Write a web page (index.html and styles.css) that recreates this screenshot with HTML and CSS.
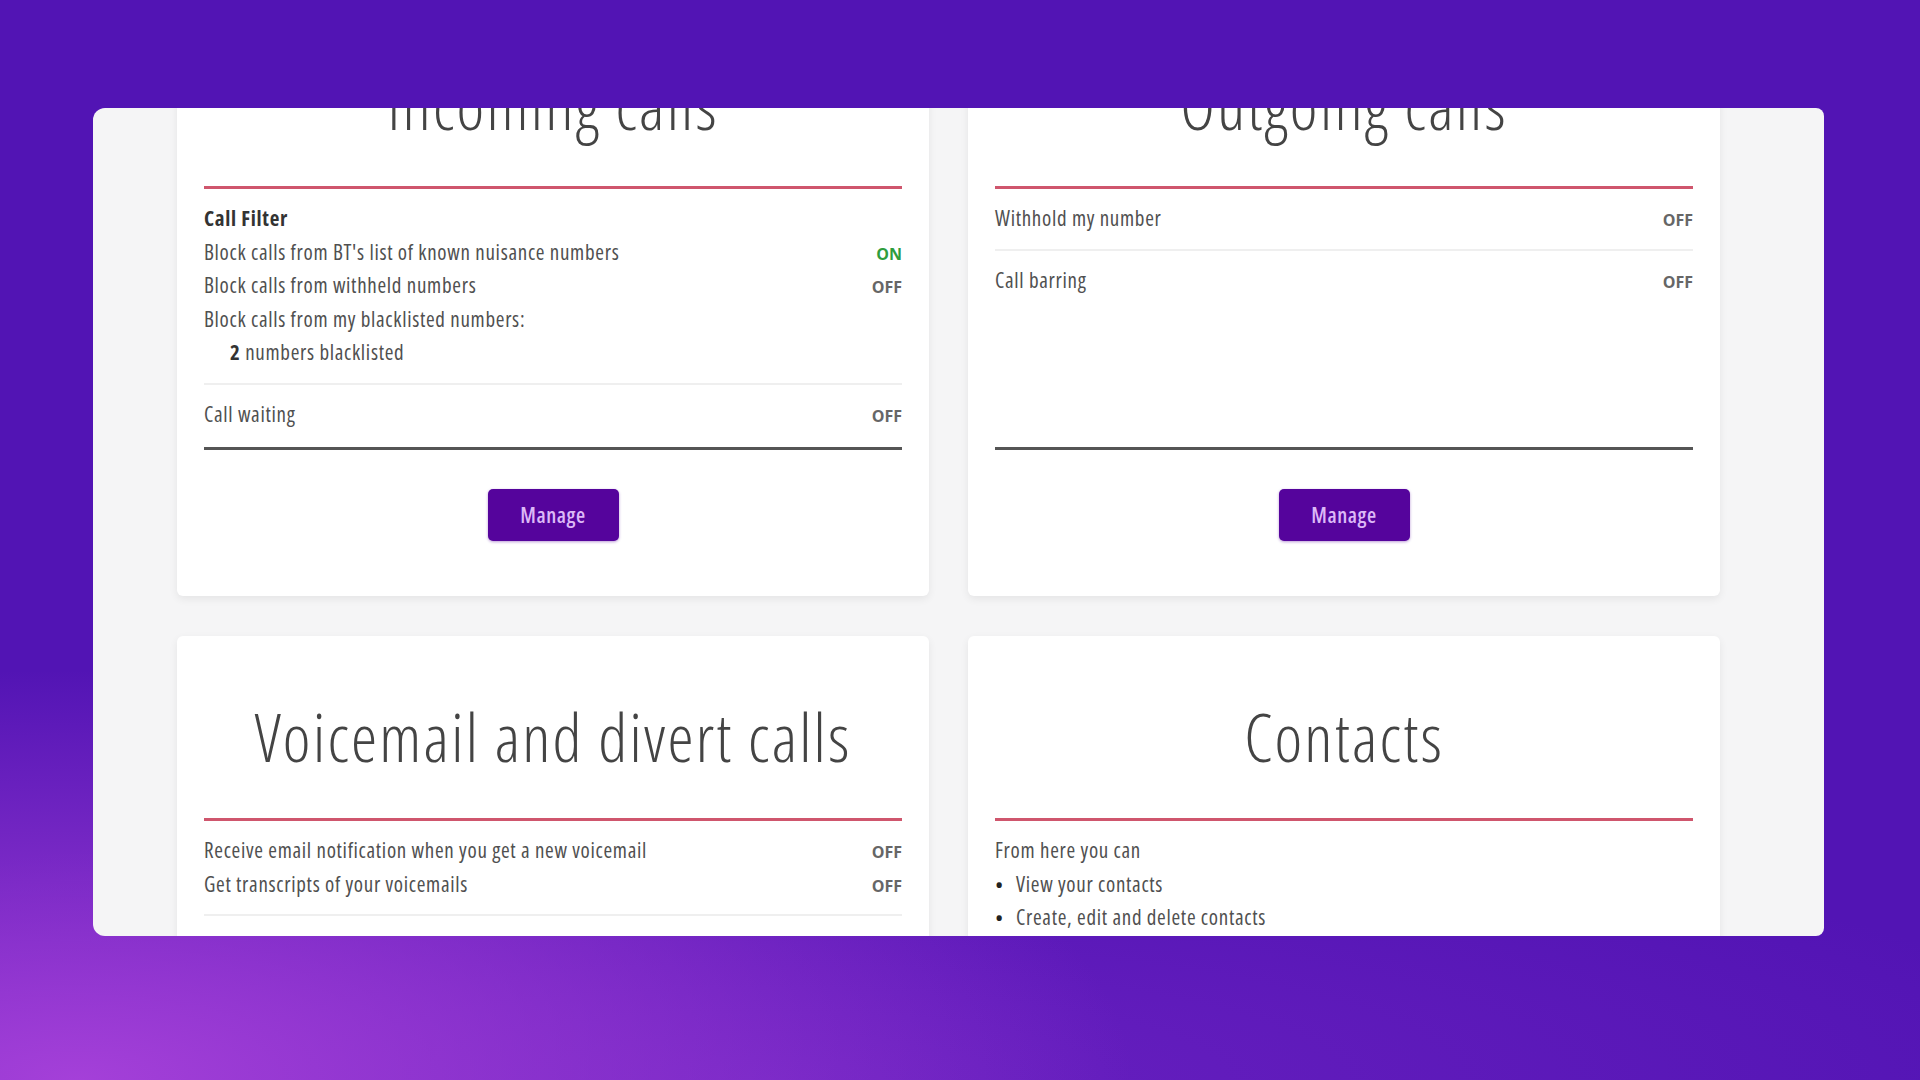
FILE: index.html
```html
<!DOCTYPE html>
<html lang="en">
<head>
    <meta charset="UTF-8">
    <meta name="viewport" content="width=device-width, initial-scale=1.0">
    <title>Calling features - BT</title>
    <link rel="stylesheet" href="styles.css">
</head>
<body>

<div class="frame">
    <div class="viewport">
        <div class="cards">

            <section class="card">
                <h2 class="card-title">Incoming calls</h2>
                <div class="settings closed">
                    <div class="group">
                        <div class="row"><strong class="group-head">Call Filter</strong></div>
                        <div class="row"><span>Block calls from BT's list of known nuisance numbers</span><span class="state on">ON</span></div>
                        <div class="row"><span>Block calls from withheld numbers</span><span class="state">OFF</span></div>
                        <div class="row"><span>Block calls from my blacklisted numbers:</span></div>
                        <div class="row sub"><span><b>2</b> numbers blacklisted</span></div>
                    </div>
                    <div class="group">
                        <div class="row"><span>Call waiting</span><span class="state">OFF</span></div>
                    </div>
                </div>
                <div class="actions"><a href="#" class="btn">Manage</a></div>
            </section>

            <section class="card">
                <h2 class="card-title">Outgoing calls</h2>
                <div class="settings closed">
                    <div class="group">
                        <div class="row"><span>Withhold my number</span><span class="state">OFF</span></div>
                    </div>
                    <div class="group">
                        <div class="row"><span>Call barring</span><span class="state">OFF</span></div>
                    </div>
                </div>
                <div class="actions"><a href="#" class="btn">Manage</a></div>
            </section>

            <section class="card">
                <h2 class="card-title">Voicemail and divert calls</h2>
                <div class="settings">
                    <div class="group">
                        <div class="row"><span>Receive email notification when you get a new voicemail</span><span class="state">OFF</span></div>
                        <div class="row"><span>Get transcripts of your voicemails</span><span class="state">OFF</span></div>
                    </div>
                    <div class="group">
                        <div class="row"><span>Divert calls</span><span class="state">OFF</span></div>
                    </div>
                </div>
            </section>

            <section class="card">
                <h2 class="card-title">Contacts</h2>
                <div class="settings">
                    <div class="group">
                        <div class="row"><span>From here you can</span></div>
                        <ul class="bullets">
                            <li>View your contacts</li>
                            <li>Create, edit and delete contacts</li>
                            <li>Import contacts</li>
                        </ul>
                    </div>
                </div>
            </section>

        </div>
    </div>
</div>

</body>
</html>
```

FILE: styles.css
```css
html, body {
    height: 100%;
}
body {
    margin: 0;
    font-family: "Open Sans", sans-serif;
    font-stretch: 75%;
    color: #505050;
    background-color: #5214b4;
    background-image:
        radial-gradient(ellipse 55% 38% at 4% 100%, rgba(168, 66, 218, 0.95), rgba(168, 66, 218, 0) 100%),
        radial-gradient(ellipse 70% 25% at 40% 100%, rgba(120, 40, 200, 0.6), rgba(120, 40, 200, 0) 100%);
    overflow: hidden;
}
.frame {
    padding: 108px 0 0 93px;
}
.viewport {
    width: 1731px;
    height: 828px;
    background: #f5f5f6;
    border-radius: 12px 8px 8px 12px;
    overflow: hidden;
}
/* page is scrolled, the top of the first row sits above the frame */
.cards {
    display: grid;
    grid-template-columns: 752px 752px;
    column-gap: 39px;
    row-gap: 40px;
    padding-left: 84px;
    margin-top: -104px;
}
.card {
    background: #fff;
    border-radius: 6px;
    box-shadow: 0 3px 8px rgba(0, 0, 0, 0.07);
    padding: 0 27px;
    display: flex;
    flex-direction: column;
}
.card-title {
    margin: 0;
    height: 182px;
    box-sizing: border-box;
    padding-top: 67px;
    font-weight: 300;
    font-size: 66px;
    line-height: 66px;
    letter-spacing: 2.2px;
    color: #444;
    text-align: center;
    white-space: nowrap;
}
.settings {
    border-top: 3px solid #cf566d;
    flex: 1;
}
.settings.closed {
    border-bottom: 3px solid #555;
}
.group {
    padding: 13px 0;
    border-bottom: 2px solid #efefef;
}
.settings.closed .group:last-child {
    border-bottom: none;
    padding-bottom: 16px;
}
.row,
.bullets li {
    font-size: 21px;
    line-height: 33.5px;
    height: 33.5px;
    letter-spacing: 0.7px;
}
.row {
    display: flex;
    justify-content: space-between;
    align-items: baseline;
}
.row.sub {
    padding-left: 26px;
}
.row b,
.group-head {
    color: #333;
    font-weight: 700;
}
.state {
    font-size: 16px;
    line-height: 20px;
    font-weight: 700;
    font-stretch: 100%;
    letter-spacing: 0;
    color: #666;
}
.state.on {
    color: #2f9d3d;
}
.bullets {
    list-style: none;
    margin: 0;
    padding: 0;
}
.bullets li {
    display: flex;
}
.bullets li::before {
    content: "\2022";
    width: 21px;
    font-size: 22px;
    color: #222;
}
.actions {
    padding: 39px 0 55px;
    display: flex;
    justify-content: center;
}
.btn {
    width: 131px;
    height: 52px;
    display: flex;
    align-items: center;
    justify-content: center;
    background: #55049c;
    color: #dcb8f7;
    border-radius: 5px;
    font-size: 21px;
    font-weight: 600;
    letter-spacing: 0.6px;
    text-decoration: none;
    box-shadow: 0 1px 3px rgba(85, 4, 156, 0.4);
}
```
